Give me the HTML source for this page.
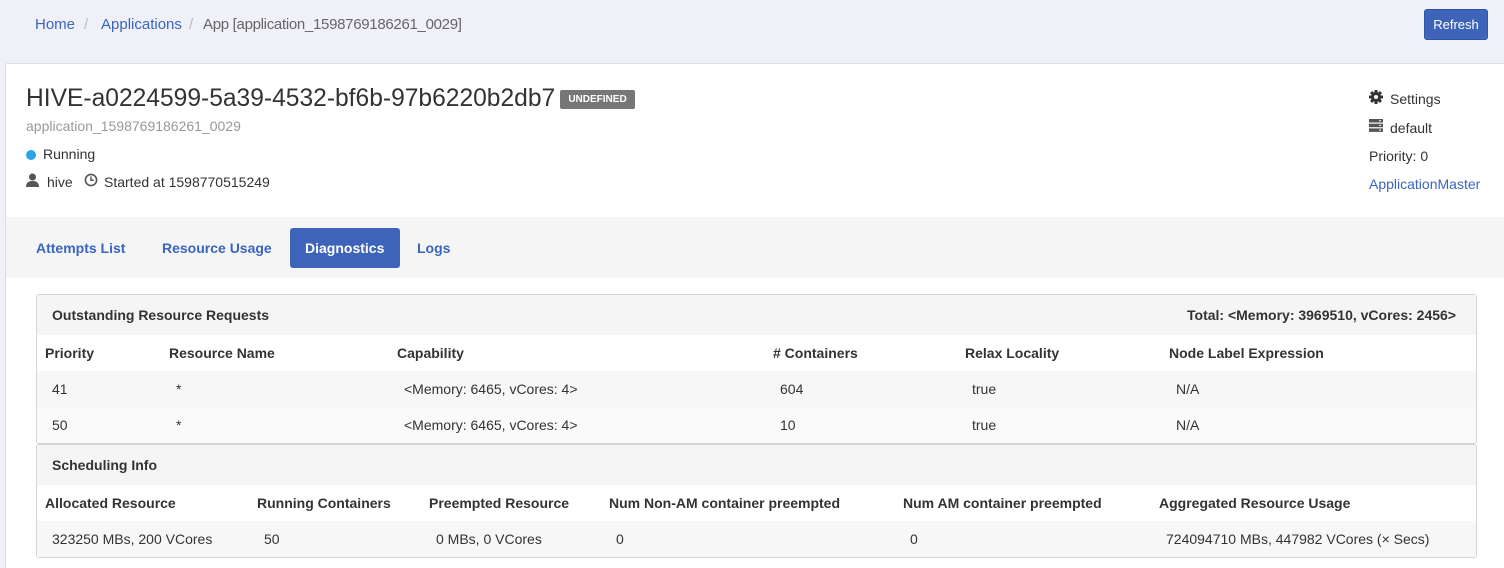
<!DOCTYPE html>
<html><head><style>
*{margin:0;padding:0;box-sizing:border-box}
html,body{width:1504px;height:568px;overflow:hidden}
body{background:#f0f0f8;font-family:"Liberation Sans",sans-serif;font-size:14px;color:#333;position:relative}
.a{position:absolute;white-space:nowrap;line-height:17px}
.lk{color:#3a65bf}
.b{font-weight:bold}
.card{position:absolute;left:5px;top:63px;width:1510px;height:520px;background:#fff;border:1px solid #ddd;border-radius:3px}
.tabs{position:absolute;left:6px;top:217px;width:1498px;height:61px;background:#f5f5f5}
.panel{position:absolute;left:36px;width:1441px;border:1px solid #d5d5d5;border-radius:3px;background:#fff;overflow:hidden}
.ph{height:40px;background:#f5f5f5}
.row{position:relative;height:36px}
.g{background:#f7f7f7}
</style></head><body>
<div class="a lk" style="left:35px;top:16px;font-size:15px">Home</div>
<div class="a" style="left:84px;top:16px;color:#bbb;font-size:15px">/</div>
<div class="a lk" style="left:101px;top:16px;font-size:15px">Applications</div>
<div class="a" style="left:189px;top:16px;color:#bbb;font-size:15px">/</div>
<div class="a" style="left:203px;top:16px;color:#666;font-size:15px;letter-spacing:-0.3px">App [application_1598769186261_0029]</div>
<div class="a" style="left:1424px;top:9px;width:64px;height:31px;background:#3d64b8;border:1px solid #2f55a8;border-radius:3px;color:#fff;font-size:13px;text-align:center;line-height:29px">Refresh</div>

<div class="card"></div>
<div class="a" style="left:26px;top:86px;font-size:24.6px;line-height:26px;color:#333">HIVE-a0224599-5a39-4532-bf6b-97b6220b2db7</div>
<div class="a" style="left:560px;top:90px;width:75px;height:19px;background:#777;border-radius:2px;color:#fff;font-size:10px;font-weight:bold;text-align:center;line-height:19px">UNDEFINED</div>
<div class="a" style="left:26px;top:118px;color:#999;font-size:14px">application_1598769186261_0029</div>
<div class="a" style="left:26px;top:150px;width:10px;height:10px;border-radius:50%;background:#2aa3e8"></div>
<div class="a" style="left:43px;top:146px">Running</div>
<svg class="a" style="left:26px;top:173px" width="13" height="14" viewBox="0 0 13 14"><circle cx="6.5" cy="4" r="3.5" fill="#555"/><path d="M0 14 Q0 8 6.5 8 Q13 8 13 14Z" fill="#555"/></svg>
<div class="a" style="left:47px;top:174px">hive</div>
<svg class="a" style="left:84px;top:173px" width="14" height="14" viewBox="0 0 14 14"><circle cx="7" cy="7" r="5.6" fill="none" stroke="#555" stroke-width="1.6"/><path d="M7 3.5V7.3H9.8" fill="none" stroke="#555" stroke-width="1.5"/></svg>
<div class="a" style="left:104px;top:174px">Started at 1598770515249</div>

<svg class="a" style="left:1369px;top:90px" width="14" height="14" viewBox="0 0 14 14"><g fill="#333"><circle cx="7" cy="7" r="5"/><rect x="5.5" y="0" width="3" height="14"/><rect x="0" y="5.5" width="14" height="3"/><rect x="5.5" y="0" width="3" height="14" transform="rotate(45 7 7)"/><rect x="5.5" y="0" width="3" height="14" transform="rotate(-45 7 7)"/></g><circle cx="7" cy="7" r="2" fill="#fff"/></svg>
<div class="a" style="left:1390px;top:91px">Settings</div>
<svg class="a" style="left:1369px;top:119px" width="14" height="13" viewBox="0 0 14 13"><g fill="#555"><rect y="0" width="14" height="3.5"/><rect y="4.7" width="14" height="3.5"/><rect y="9.4" width="14" height="3.5"/></g><g fill="#fff"><rect x="10" y="1.2" width="2" height="1"/><rect x="10" y="5.9" width="2" height="1"/><rect x="10" y="10.6" width="2" height="1"/></g></svg>
<div class="a" style="left:1390px;top:120px">default</div>
<div class="a" style="left:1369px;top:148px">Priority: 0</div>
<div class="a lk" style="left:1369px;top:176px">ApplicationMaster</div>

<div class="tabs"></div>
<div class="a lk b" style="left:36px;top:240px">Attempts List</div>
<div class="a lk b" style="left:162px;top:240px">Resource Usage</div>
<div class="a" style="left:290px;top:228px;width:110px;height:40px;background:#3d64b8;border-radius:3px"></div>
<div class="a b" style="left:305px;top:240px;color:#fff">Diagnostics</div>
<div class="a lk b" style="left:417px;top:240px">Logs</div>

<div class="panel" style="top:294px;height:150px">
<div class="ph"></div><div class="row"></div><div class="row g"></div><div class="row g" style="background:#fafafa"></div>
</div>
<div class="a b" style="left:52px;top:307px">Outstanding Resource Requests</div>
<div class="a b" style="left:1187px;top:307px">Total: &lt;Memory: 3969510, vCores: 2456&gt;</div>
<div class="a b" style="left:45px;top:345px">Priority</div>
<div class="a b" style="left:169px;top:345px">Resource Name</div>
<div class="a b" style="left:397px;top:345px">Capability</div>
<div class="a b" style="left:773px;top:345px"># Containers</div>
<div class="a b" style="left:965px;top:345px">Relax Locality</div>
<div class="a b" style="left:1169px;top:345px">Node Label Expression</div>
<div class="a" style="left:52px;top:381px">41</div><div class="a" style="left:176px;top:381px">*</div><div class="a" style="left:404px;top:381px">&lt;Memory: 6465, vCores: 4&gt;</div><div class="a" style="left:780px;top:381px">604</div><div class="a" style="left:972px;top:381px">true</div><div class="a" style="left:1176px;top:381px">N/A</div>
<div class="a" style="left:52px;top:417px">50</div><div class="a" style="left:176px;top:417px">*</div><div class="a" style="left:404px;top:417px">&lt;Memory: 6465, vCores: 4&gt;</div><div class="a" style="left:780px;top:417px">10</div><div class="a" style="left:972px;top:417px">true</div><div class="a" style="left:1176px;top:417px">N/A</div>

<div class="panel" style="top:444px;height:114px">
<div class="ph"></div><div class="row"></div><div class="row g"></div>
</div>
<div class="a b" style="left:52px;top:457px">Scheduling Info</div>
<div class="a b" style="left:45px;top:495px">Allocated Resource</div>
<div class="a b" style="left:257px;top:495px">Running Containers</div>
<div class="a b" style="left:429px;top:495px">Preempted Resource</div>
<div class="a b" style="left:609px;top:495px">Num Non-AM container preempted</div>
<div class="a b" style="left:903px;top:495px">Num AM container preempted</div>
<div class="a b" style="left:1159px;top:495px">Aggregated Resource Usage</div>
<div class="a" style="left:52px;top:531px">323250 MBs, 200 VCores</div>
<div class="a" style="left:264px;top:531px">50</div>
<div class="a" style="left:436px;top:531px">0 MBs, 0 VCores</div>
<div class="a" style="left:616px;top:531px">0</div>
<div class="a" style="left:910px;top:531px">0</div>
<div class="a" style="left:1166px;top:531px">724094710 MBs, 447982 VCores (× Secs)</div>
</body></html>
